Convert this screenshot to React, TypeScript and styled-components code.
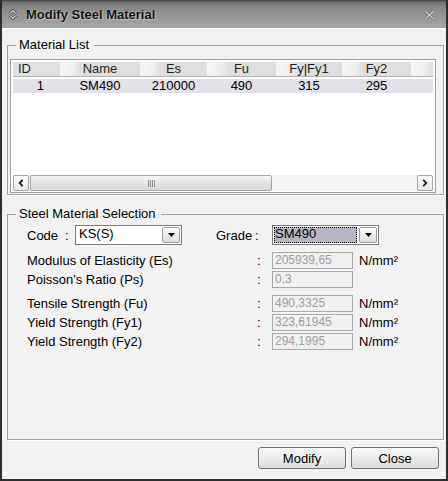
import React from "react";
import styled, { createGlobalStyle } from "styled-components";

const Global = createGlobalStyle`
  html, body { margin: 0; padding: 0; background: #f2f2f2; }
  body { font-family: "Liberation Sans", Arial, sans-serif; font-size: 13px; color: #000; }
  * { box-sizing: border-box; }
`;

const Window = styled.div`
  width: 448px;
  height: 481px;
  border: 2px solid #2e2e2e;
  border-top: 0;
  display: flex;
  flex-direction: column;
  background: #f2f2f2;
`;

const TitleBar = styled.div`
  height: 28px;
  flex: none;
  display: flex;
  align-items: center;
  padding: 1px 0 0 7px;
  background: linear-gradient(#3e3e3e 0, #6e6e6e 2px, #848484 6px, #979797 60%, #a8a8a8 100%);
`;

const TitleIcon = styled.svg`
  width: 8px;
  height: 11px;
  flex: none;
`;

const TitleText = styled.div`
  margin-left: 9px;
  font-weight: bold;
  font-size: 13px;
  color: #141414;
  text-shadow: 0 0 2px rgba(255, 255, 255, 0.55), 1px 1px 0 rgba(255, 255, 255, 0.25);
  flex: 1;
`;

const CloseIcon = styled.svg`
  width: 11px;
  height: 10px;
  margin-right: 11px;
  flex: none;
`;

const Content = styled.div`
  flex: 1;
  display: flex;
  flex-direction: column;
  border-top: 1px solid #ffffff;
  padding: 0 2px 10px 5px;
  min-height: 0;
`;

const Group = styled.fieldset<{ $grow?: boolean; $top: number }>`
  margin: ${(p) => p.$top}px 0 0 0;
  padding: 0;
  min-width: 0;
  border: 1px solid #a3a3a3;
  box-shadow: 1px 1px 0 #ffffff;
  flex: ${(p) => (p.$grow ? "1" : "none")};
  display: flex;
  flex-direction: column;
`;

const Legend = styled.legend`
  margin-left: 8px;
  padding: 0 5px 0 3px;
  line-height: 16px;
  font-size: 13px;
  color: #000;
`;

const ListBox = styled.div`
  margin: 6px 7px 1px 2px;
  height: 134px;
  border: 1px solid #a0a0a0;
  background: #ffffff;
  padding: 2px 2px 1px 2px;
  display: flex;
  flex-direction: column;
`;

const cols = "47px 80px 67px 69px 66px 69px 1fr";

const HeaderRow = styled.div`
  display: grid;
  grid-template-columns: ${cols};
  height: 15px;
  border-bottom: 1px solid #b0b0b0;
`;

const HeaderCell = styled.div<{ $first?: boolean }>`
  line-height: 14px;
  font-size: 13px;
  color: #1e1e1e;
  text-align: ${(p) => (p.$first ? "left" : "center")};
  padding-left: ${(p) => (p.$first ? "5px" : "0")};
  background: ${(p) =>
    p.$first
      ? "#e0e0e0"
      : "linear-gradient(to right, #f6f6f6 0, #eeeeee 14px, #dedede 22px, #dedede 100%)"};
`;

const DataRow = styled.div`
  display: grid;
  grid-template-columns: ${cols};
  height: 14px;
  margin-top: 2px;
  background: #e2e1e9;
`;

const DataCell = styled.div<{ $right?: boolean }>`
  line-height: 14px;
  font-size: 13px;
  text-align: ${(p) => (p.$right ? "right" : "center")};
  padding-right: ${(p) => (p.$right ? "16px" : "0")};
`;

const HScroll = styled.div`
  margin-top: auto;
  height: 16px;
  display: flex;
  background: #f4f4f4;
`;

const ScrollBtn = styled.div`
  width: 16px;
  height: 16px;
  flex: none;
  border: 1px solid #a6a6a6;
  border-radius: 2px;
  background: linear-gradient(#fdfdfd, #e6e6e6);
  display: flex;
  align-items: center;
  justify-content: center;
`;

const Track = styled.div`
  flex: 1;
  display: flex;
  padding-left: 1px;
`;

const Thumb = styled.div`
  width: 242px;
  height: 16px;
  border: 1px solid #a3a3a3;
  border-radius: 2px;
  background: linear-gradient(#f6f6f6, #e2e2e2 55%, #d9d9d9);
  display: flex;
  align-items: center;
  justify-content: center;
`;

const SelBody = styled.div`
  padding: 3px 0 0 19px;
  display: flex;
  flex-direction: column;
`;

const CodeRow = styled.div`
  display: flex;
  align-items: center;
  height: 20px;
`;

const FieldLabel = styled.div<{ $w: number; $ml?: number }>`
  width: ${(p) => p.$w}px;
  margin-left: ${(p) => p.$ml ?? 0}px;
  flex: none;
  white-space: pre;
`;

const Colon = styled.div<{ $w: number }>`
  width: ${(p) => p.$w}px;
  flex: none;
`;

const Combo = styled.div`
  width: 107px;
  height: 20px;
  flex: none;
  border: 1px solid #7c7c7c;
  background: #ffffff;
  display: flex;
  align-items: stretch;
  padding: 1px;
`;

const ComboText = styled.div<{ $selected?: boolean }>`
  flex: 1;
  line-height: 14px;
  padding-left: ${(p) => (p.$selected ? "1px" : "2px")};
  background: ${(p) => (p.$selected ? "#b7b6c7" : "transparent")};
  outline: ${(p) => (p.$selected ? "1px dotted #000" : "none")};
  outline-offset: -1px;
  margin-right: 2px;
`;

const ComboBtn = styled.div`
  width: 18px;
  flex: none;
  border: 1px solid #9c9c9c;
  border-radius: 2px;
  background: linear-gradient(#fefefe, #ececec 50%, #dcdcdc);
  display: flex;
  align-items: center;
  justify-content: center;
`;

const Props = styled.div`
  margin-top: 7px;
  display: flex;
  flex-direction: column;
`;

const PropRow = styled.div<{ $mt: number }>`
  display: grid;
  grid-template-columns: 230px 15px 81px auto;
  align-items: center;
  height: 17px;
  margin-top: ${(p) => p.$mt}px;
`;

const ValueBox = styled.div`
  height: 17px;
  border: 1px solid #a9a9a9;
  background: #f0f0f0;
  color: #9c9c9c;
  font-size: 12px;
  line-height: 15px;
  padding-left: 2px;
`;

const Unit = styled.div`
  margin-left: 6px;
`;

const ButtonRow = styled.div`
  margin-top: 7px;
  display: flex;
  justify-content: flex-end;
  gap: 5px;
  padding-right: 5px;
`;

const Button = styled.button`
  width: 88px;
  height: 22px;
  border: 1px solid #707070;
  border-radius: 3px;
  background: linear-gradient(#f8f8f8, #ececec 50%, #dcdcdc);
  font-family: "Liberation Sans", Arial, sans-serif;
  font-size: 13px;
  color: #000;
  padding: 0;
`;

const DownArrow = () => (
  <svg width="7" height="4" viewBox="0 0 7 4">
    <polygon points="0,0 7,0 3.5,4" fill="#000" />
  </svg>
);

const columns = ["ID", "Name", "Es", "Fu", "Fy|Fy1", "Fy2", ""];
const row = ["1", "SM490", "210000", "490", "315", "295", ""];

const props = [
  { label: "Modulus of Elasticity (Es)", value: "205939,65", unit: "N/mm²", mt: 0 },
  { label: "Poisson's Ratio (Ps)", value: "0,3", unit: "", mt: 2 },
  { label: "Tensile Strength (Fu)", value: "490,3325", unit: "N/mm²", mt: 7 },
  { label: "Yield Strength (Fy1)", value: "323,61945", unit: "N/mm²", mt: 2 },
  { label: "Yield Strength (Fy2)", value: "294,1995", unit: "N/mm²", mt: 2 },
];

export default function App() {
  return (
    <>
      <Global />
      <Window>
        <TitleBar>
          <TitleIcon viewBox="0 0 8 11">
            <polyline points="1,4.5 4,1.5 7,4.5" fill="none" stroke="#3a3a3a" strokeWidth="2.4" />
            <polyline points="1,6.5 4,9.5 7,6.5" fill="none" stroke="#3a3a3a" strokeWidth="2.4" />
            <polyline points="1.3,4.3 4,1.6 6.7,4.3" fill="none" stroke="#e6e6e6" strokeWidth="1.1" />
            <polyline points="1.3,6.7 4,9.4 6.7,6.7" fill="none" stroke="#e6e6e6" strokeWidth="1.1" />
          </TitleIcon>
          <TitleText>Modify Steel Material</TitleText>
          <CloseIcon viewBox="0 0 11 10">
            <path d="M1.5 1.5 L9.5 8.5 M9.5 1.5 L1.5 8.5" stroke="#6a6a6a" strokeWidth="2.6" />
            <path d="M1.5 1.5 L9.5 8.5 M9.5 1.5 L1.5 8.5" stroke="#d4d4d4" strokeWidth="1.3" />
          </CloseIcon>
        </TitleBar>
        <Content>
          <Group $top={8}>
            <Legend>Material List</Legend>
            <ListBox>
              <HeaderRow>
                {columns.map((c, i) => (
                  <HeaderCell key={i} $first={i === 0}>
                    {c}
                  </HeaderCell>
                ))}
              </HeaderRow>
              <DataRow>
                {row.map((c, i) => (
                  <DataCell key={i} $right={i === 0}>
                    {c}
                  </DataCell>
                ))}
              </DataRow>
              <HScroll>
                <ScrollBtn>
                  <svg width="6" height="8" viewBox="0 0 6 8">
                    <polyline points="4.8,0.8 1.6,4 4.8,7.2" fill="none" stroke="#1e1e1e" strokeWidth="1.8" />
                  </svg>
                </ScrollBtn>
                <Track>
                  <Thumb>
                    <svg width="7" height="7" viewBox="0 0 7 7">
                      <path d="M0.5 0 V7 M2.5 0 V7 M4.5 0 V7 M6.5 0 V7" stroke="#8c8c8c" strokeWidth="1" />
                    </svg>
                  </Thumb>
                </Track>
                <ScrollBtn>
                  <svg width="6" height="8" viewBox="0 0 6 8">
                    <polyline points="1.2,0.8 4.4,4 1.2,7.2" fill="none" stroke="#1e1e1e" strokeWidth="1.8" />
                  </svg>
                </ScrollBtn>
              </HScroll>
            </ListBox>
          </Group>
          <Group $top={11} $grow>
            <Legend>Steel Material Selection</Legend>
            <SelBody>
              <CodeRow>
                <FieldLabel $w={38}>Code</FieldLabel>
                <Colon $w={10}>:</Colon>
                <Combo>
                  <ComboText>KS(S)</ComboText>
                  <ComboBtn>
                    <DownArrow />
                  </ComboBtn>
                </Combo>
                <FieldLabel $w={39} $ml={34}>Grade</FieldLabel>
                <Colon $w={17}>:</Colon>
                <Combo>
                  <ComboText $selected>SM490</ComboText>
                  <ComboBtn>
                    <DownArrow />
                  </ComboBtn>
                </Combo>
              </CodeRow>
              <Props>
                {props.map((p) => (
                  <PropRow key={p.label} $mt={p.mt}>
                    <div>{p.label}</div>
                    <div>:</div>
                    <ValueBox>{p.value}</ValueBox>
                    <Unit>{p.unit}</Unit>
                  </PropRow>
                ))}
              </Props>
            </SelBody>
          </Group>
          <ButtonRow>
            <Button>Modify</Button>
            <Button>Close</Button>
          </ButtonRow>
        </Content>
      </Window>
    </>
  );
}
